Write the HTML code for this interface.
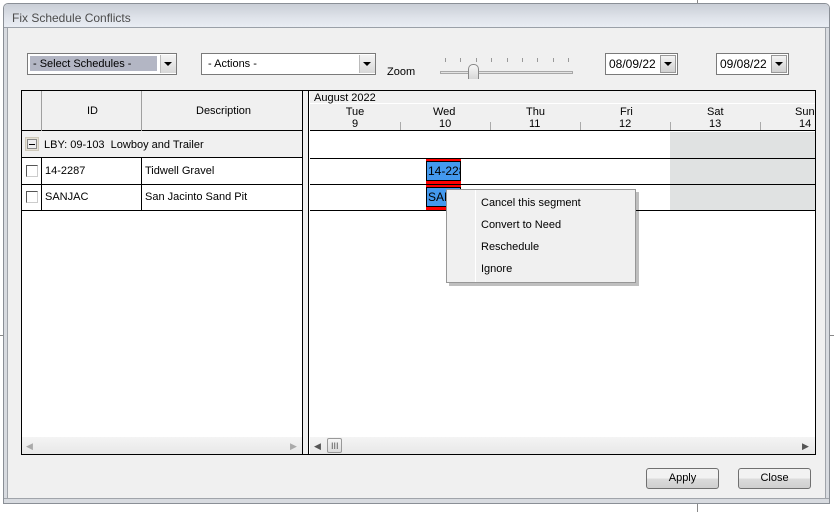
<!DOCTYPE html>
<html><head><meta charset="utf-8">
<style>
*{box-sizing:border-box;margin:0;padding:0}
body{width:834px;height:512px;background:#fff;font-family:"Liberation Sans",sans-serif;font-size:11px;color:#000;position:relative;overflow:hidden}
.a{position:absolute}
.t{position:absolute;white-space:nowrap;font-size:11px;line-height:14px}
</style></head><body>
<div class="a" style="left:697px;top:0;width:1px;height:4px;background:#888"></div>
<div class="a" style="left:697px;top:503px;width:1px;height:9px;background:#888"></div>
<div class="a" style="left:0;top:335px;width:3px;height:1px;background:#888"></div>
<div class="a" style="left:830px;top:335px;width:4px;height:1px;background:#888"></div>
<div class="a" style="left:3px;top:3px;width:827px;height:501px;border:1px solid #8a8f96;border-radius:5px 5px 0 0;background:#f0f0f0"></div>
<div class="a" style="left:4px;top:4px;width:825px;height:24px;border-radius:4px 4px 0 0;background:linear-gradient(#c9ced6,#dfe3ea 60%,#e9edf3);border-bottom:1px solid #9aa0a8"></div>
<div class="t" style="left:12px;top:11px;color:#4c4c4c;font-size:12px">Fix Schedule Conflicts</div>
<div class="a" style="left:4px;top:28px;width:4px;height:475px;background:#d8dbe0;border-right:1px solid #a0a4aa"></div>
<div class="a" style="left:825px;top:28px;width:4px;height:475px;background:#d8dbe0;border-left:1px solid #a0a4aa"></div>
<div class="a" style="left:4px;top:498px;width:825px;height:5px;background:#d8dbe0;border-top:1px solid #a0a4aa"></div>

<div class="a" style="left:27px;top:53px;width:150px;height:22px;border:1px solid #7a7a7a;background:#fff"></div>
<div class="a" style="left:30px;top:56px;width:127px;height:15px;background:#b3b6c4"></div>
<div class="t" style="left:33px;top:57px">- Select Schedules -</div>
<div class="a" style="left:160px;top:55px;width:16px;height:18px;background:linear-gradient(#f4f4f4,#d8d8d8);border-left:1px solid #bbb"></div>
<div class="a" style="left:164px;top:62px;border-left:4px solid transparent;border-right:4px solid transparent;border-top:4px solid #000"></div>
<div class="a" style="left:201px;top:53px;width:175px;height:22px;border:1px solid #7a7a7a;background:#fff"></div>
<div class="t" style="left:208px;top:57px">- Actions -</div>
<div class="a" style="left:359px;top:55px;width:16px;height:18px;background:linear-gradient(#f4f4f4,#d8d8d8);border-left:1px solid #bbb"></div>
<div class="a" style="left:363px;top:62px;border-left:4px solid transparent;border-right:4px solid transparent;border-top:4px solid #000"></div>
<div class="t" style="left:387px;top:65px">Zoom</div>
<div class="a" style="left:440px;top:71px;width:133px;height:3px;border:1px solid #a8a8a8;background:#e4e4e4"></div>
<div class="a" style="left:445px;top:58px;width:1px;height:4px;background:#999"></div>
<div class="a" style="left:460px;top:58px;width:1px;height:4px;background:#999"></div>
<div class="a" style="left:476px;top:58px;width:1px;height:4px;background:#999"></div>
<div class="a" style="left:491px;top:58px;width:1px;height:4px;background:#999"></div>
<div class="a" style="left:507px;top:58px;width:1px;height:4px;background:#999"></div>
<div class="a" style="left:522px;top:58px;width:1px;height:4px;background:#999"></div>
<div class="a" style="left:537px;top:58px;width:1px;height:4px;background:#999"></div>
<div class="a" style="left:553px;top:58px;width:1px;height:4px;background:#999"></div>
<div class="a" style="left:568px;top:58px;width:1px;height:4px;background:#999"></div>
<div class="a" style="left:468px;top:64px;width:11px;height:15px;border:1px solid #888;border-bottom:none;border-radius:5px 5px 0 0;background:linear-gradient(#f8f8f8,#d6d6d6)"></div>
<div class="a" style="left:605px;top:53px;width:73px;height:22px;border:1px solid #7a7a7a;background:#fff"></div>
<div class="t" style="left:609px;top:57px;font-size:12px">08/09/22</div>
<div class="a" style="left:660px;top:55px;width:16px;height:18px;background:linear-gradient(#f4f4f4,#d0d0d0);border:1px solid #999"></div>
<div class="a" style="left:664px;top:62px;border-left:4px solid transparent;border-right:4px solid transparent;border-top:4px solid #000"></div>
<div class="a" style="left:716px;top:53px;width:73px;height:22px;border:1px solid #7a7a7a;background:#fff"></div>
<div class="t" style="left:720px;top:57px;font-size:12px">09/08/22</div>
<div class="a" style="left:771px;top:55px;width:16px;height:18px;background:linear-gradient(#f4f4f4,#d0d0d0);border:1px solid #999"></div>
<div class="a" style="left:775px;top:62px;border-left:4px solid transparent;border-right:4px solid transparent;border-top:4px solid #000"></div>

<div class="a" style="left:21px;top:90px;width:795px;height:365px;border:1px solid #000;background:#fff"></div>
<div class="a" style="left:302px;top:91px;width:7px;height:363px;background:#f0f0f0;border-left:1px solid #000;border-right:1px solid #000"></div>
<div class="a" style="left:22px;top:91px;width:280px;height:40px;background:#f0f0f0;border-bottom:1px solid #000"></div>
<div class="a" style="left:41px;top:91px;width:1px;height:40px;background:#a0a0a0"></div>
<div class="a" style="left:141px;top:91px;width:1px;height:40px;background:#a0a0a0"></div>
<div class="t" style="left:87px;top:104px">ID</div>
<div class="t" style="left:196px;top:104px">Description</div>
<div class="a" style="left:22px;top:131px;width:280px;height:27px;background:#f0f0f0;border-bottom:1px solid #000"></div>
<div class="a" style="left:25px;top:137px;width:14px;height:14px;background:#e6e2d6;border:1px solid #cfcabb"></div>
<div class="a" style="left:27px;top:139px;width:10px;height:10px;border:1px solid #888;background:#eee"></div>
<div class="a" style="left:29px;top:144px;width:6px;height:1px;background:#000"></div>
<div class="t" style="left:44px;top:138px">LBY: 09-103&nbsp; Lowboy and Trailer</div>
<div class="a" style="left:22px;top:184px;width:280px;height:1px;background:#000"></div>
<div class="a" style="left:22px;top:210px;width:280px;height:1px;background:#000"></div>
<div class="a" style="left:41px;top:158px;width:1px;height:52px;background:#000"></div>
<div class="a" style="left:141px;top:158px;width:1px;height:52px;background:#000"></div>
<div class="a" style="left:26px;top:165px;width:12px;height:12px;border:1px solid #555;border-right-color:#ccc;border-bottom-color:#ccc;background:#fff"></div>
<div class="a" style="left:26px;top:191px;width:12px;height:12px;border:1px solid #555;border-right-color:#ccc;border-bottom-color:#ccc;background:#fff"></div>
<div class="t" style="left:45px;top:164px">14-2287</div>
<div class="t" style="left:145px;top:164px">Tidwell Gravel</div>
<div class="t" style="left:45px;top:190px">SANJAC</div>
<div class="t" style="left:145px;top:190px">San Jacinto Sand Pit</div>
<div class="a" style="left:22px;top:437px;width:280px;height:17px;background:linear-gradient(#f4f4f4,#e8e8e8)"></div>
<div class="t" style="left:26px;top:439px;color:#aaa;font-size:9px">&#9664;</div>
<div class="t" style="left:290px;top:439px;color:#aaa;font-size:9px">&#9654;</div>

<div class="a" style="left:310px;top:91px;width:505px;height:40px;background:#f0f0f0;border-bottom:1px solid #000"></div>
<div class="a" style="left:310px;top:103px;width:505px;height:1px;background:#fff"></div>
<div class="t" style="left:314px;top:91px">August 2022</div>
<div class="t" style="left:345px;top:105px;text-align:center;width:20px">Tue</div>
<div class="t" style="left:345px;top:117px;text-align:center;width:20px">9</div>
<div class="t" style="left:433px;top:105px">Wed</div>
<div class="t" style="left:439px;top:117px">10</div>
<div class="t" style="left:526px;top:105px">Thu</div>
<div class="t" style="left:529px;top:117px">11</div>
<div class="t" style="left:620px;top:105px">Fri</div>
<div class="t" style="left:619px;top:117px">12</div>
<div class="t" style="left:707px;top:105px">Sat</div>
<div class="t" style="left:709px;top:117px">13</div>
<div class="t" style="left:795px;top:105px">Sun</div>
<div class="t" style="left:799px;top:117px">14</div>
<div class="a" style="left:400px;top:122px;width:1px;height:8px;background:#aaa"></div>
<div class="a" style="left:490px;top:122px;width:1px;height:8px;background:#aaa"></div>
<div class="a" style="left:580px;top:122px;width:1px;height:8px;background:#aaa"></div>
<div class="a" style="left:670px;top:122px;width:1px;height:8px;background:#aaa"></div>
<div class="a" style="left:760px;top:122px;width:1px;height:8px;background:#aaa"></div>
<div class="a" style="left:670px;top:132px;width:145px;height:78px;background:#e0e2e2"></div>
<div class="a" style="left:310px;top:158px;width:505px;height:1px;background:#000"></div>
<div class="a" style="left:310px;top:184px;width:505px;height:1px;background:#000"></div>
<div class="a" style="left:310px;top:210px;width:505px;height:1px;background:#000"></div>
<div class="a" style="left:426px;top:159px;width:35px;height:25px;background:#f00"></div>
<div class="a" style="left:426px;top:161px;width:35px;height:20px;background:#4499ee;border:1px solid #000;overflow:hidden"><div class="t" style="left:1px;top:2px;font-size:12px">14-2287</div></div>
<div class="a" style="left:426px;top:185px;width:35px;height:25px;background:#f00"></div>
<div class="a" style="left:426px;top:187px;width:35px;height:20px;background:#4499ee;border:1px solid #000;overflow:hidden"><div class="t" style="left:1px;top:2px;font-size:12px">SANJAC</div></div>
<div class="a" style="left:310px;top:437px;width:505px;height:17px;background:linear-gradient(#f4f4f4,#e8e8e8)"></div>
<div class="t" style="left:314px;top:439px;color:#555;font-size:9px">&#9664;</div>
<div class="t" style="left:802px;top:439px;color:#555;font-size:9px">&#9654;</div>
<div class="a" style="left:327px;top:438px;width:15px;height:15px;border:1px solid #999;border-radius:2px;background:linear-gradient(#f6f6f6,#dcdcdc)"></div>
<div class="t" style="left:331px;top:439px;font-size:9px;color:#555">III</div>

<div class="a" style="left:449px;top:192px;width:190px;height:94px;background:rgba(0,0,0,0.25)"></div>
<div class="a" style="left:446px;top:189px;width:190px;height:94px;background:#f0f0f0;border:1px solid #979797"></div>
<div class="a" style="left:475px;top:190px;width:1px;height:92px;background:#e2e3e3;border-right:1px solid #fff"></div>
<div class="t" style="left:481px;top:196px">Cancel this segment</div>
<div class="t" style="left:481px;top:218px">Convert to Need</div>
<div class="t" style="left:481px;top:240px">Reschedule</div>
<div class="t" style="left:481px;top:262px">Ignore</div>

<div class="a" style="left:646px;top:468px;width:73px;height:21px;border:1px solid #707070;border-radius:3px;background:linear-gradient(#f2f2f2 50%,#dcdcdc 50%,#cfcfcf)"></div>
<div class="t" style="left:646px;top:471px;width:73px;text-align:center">Apply</div>
<div class="a" style="left:738px;top:468px;width:73px;height:21px;border:1px solid #707070;border-radius:3px;background:linear-gradient(#f2f2f2 50%,#dcdcdc 50%,#cfcfcf)"></div>
<div class="t" style="left:738px;top:471px;width:73px;text-align:center">Close</div>
</body></html>
